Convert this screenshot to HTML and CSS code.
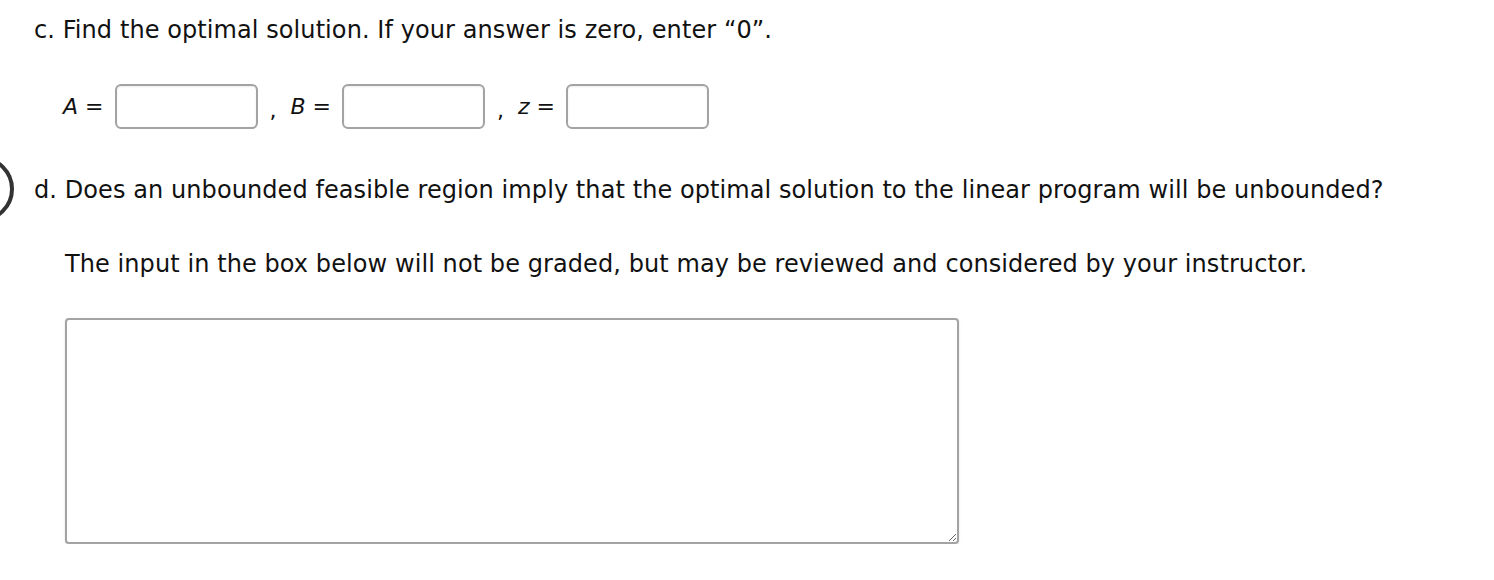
FILE: index.html
```html
<!DOCTYPE html>
<html lang="en">
<head>
  <meta charset="UTF-8" />
  <title>Linear program question</title>
  <link rel="stylesheet" href="styles.css">
</head>
<body>
  <span class="edge-circle"></span>

  <div class="part">
    <p class="prompt">c. Find the optimal solution. If your answer is zero, enter “0”.</p>
    <div class="answers">
      <label class="var"><i>A</i> =</label>
      <input class="box" type="text">
      <span class="sep">,</span>
      <label class="var"><i>B</i> =</label>
      <input class="box" type="text">
      <span class="sep">,</span>
      <label class="var"><i>z</i> =</label>
      <input class="box" type="text">
    </div>
  </div>

  <div class="part">
    <p class="prompt">d. Does an unbounded feasible region imply that the optimal solution to the linear program will be unbounded?</p>
    <p class="note">The input in the box below will not be graded, but may be reviewed and considered by your instructor.</p>
    <textarea class="essay"></textarea>
  </div>
</body>
</html>
```

FILE: styles.css
```css
body {
  margin: 0;
  padding: 16px 0 0 34px;
  font-family: 'DejaVu Sans', Verdana, sans-serif;
  color: #111;
  background: #fff;
  position: relative;
}

.edge-circle {
  position: absolute;
  left: -52px;
  top: 156px;
  width: 58px;
  height: 58px;
  border: 4px solid #333;
  border-radius: 50%;
}

.prompt {
  margin: 0;
  font-size: 24px;
  line-height: 28px;
  letter-spacing: 0.08px;
}

.answers {
  display: flex;
  align-items: center;
  margin: 40px 0 0 29px;
  font-size: 22px;
}

.var {
  margin-right: 11px;
}

.sep {
  margin: 8px 14px 0 12px;
}

.box {
  box-sizing: border-box;
  width: 143px;
  height: 45px;
  border: 2px solid #a3a3a3;
  border-radius: 6px;
  box-shadow: inset 0 1px 2px rgba(0, 0, 0, 0.08);
  font-size: 20px;
  padding: 4px 8px;
}

.part + .part {
  margin-top: 47px;
}

.note {
  margin: 46px 0 0 31px;
  font-size: 24px;
  line-height: 28px;
  letter-spacing: 0.08px;
}

.essay {
  display: block;
  box-sizing: border-box;
  width: 894px;
  height: 226px;
  margin: 40px 0 0 31px;
  border: 2px solid #a3a3a3;
  border-radius: 4px;
  box-shadow: 0 1px 2px rgba(0, 0, 0, 0.15);
  font-family: inherit;
  font-size: 20px;
  resize: both;
}
```
